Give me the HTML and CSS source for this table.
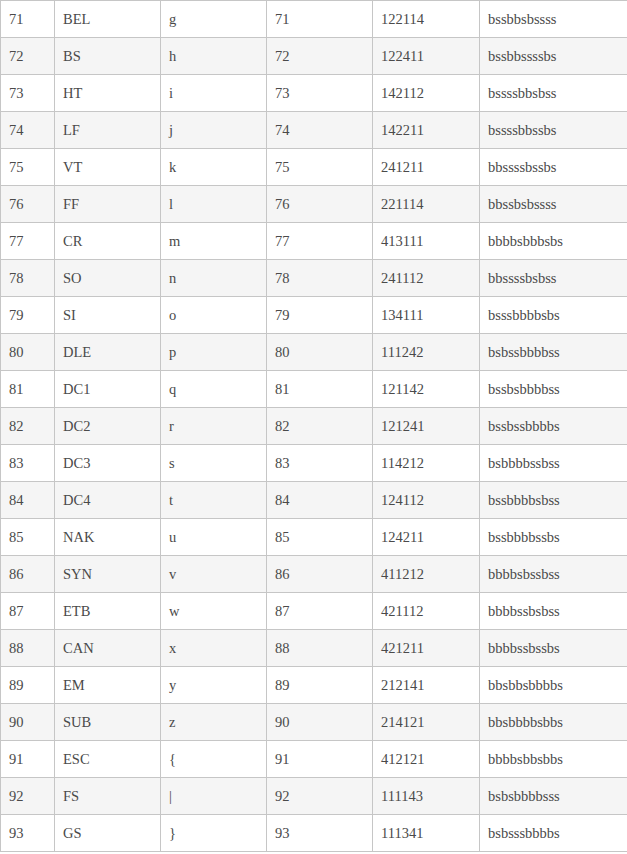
FILE: index.html
```html
<!DOCTYPE html>
<html>
<head>
<meta charset="utf-8">
<link rel="stylesheet" href="styles.css">
</head>
<body>
<table class="codes">
<colgroup>
<col class="c1"><col class="c2"><col class="c3"><col class="c4"><col class="c5"><col class="c6">
</colgroup>
<tbody>
<tr><td>71</td><td>BEL</td><td>g</td><td>71</td><td>122114</td><td>bssbbsbssss</td></tr>
<tr><td>72</td><td>BS</td><td>h</td><td>72</td><td>122411</td><td>bssbbssssbs</td></tr>
<tr><td>73</td><td>HT</td><td>i</td><td>73</td><td>142112</td><td>bssssbbsbss</td></tr>
<tr><td>74</td><td>LF</td><td>j</td><td>74</td><td>142211</td><td>bssssbbssbs</td></tr>
<tr><td>75</td><td>VT</td><td>k</td><td>75</td><td>241211</td><td>bbssssbssbs</td></tr>
<tr><td>76</td><td>FF</td><td>l</td><td>76</td><td>221114</td><td>bbssbsbssss</td></tr>
<tr><td>77</td><td>CR</td><td>m</td><td>77</td><td>413111</td><td>bbbbsbbbsbs</td></tr>
<tr><td>78</td><td>SO</td><td>n</td><td>78</td><td>241112</td><td>bbssssbsbss</td></tr>
<tr><td>79</td><td>SI</td><td>o</td><td>79</td><td>134111</td><td>bsssbbbbsbs</td></tr>
<tr><td>80</td><td>DLE</td><td>p</td><td>80</td><td>111242</td><td>bsbssbbbbss</td></tr>
<tr><td>81</td><td>DC1</td><td>q</td><td>81</td><td>121142</td><td>bssbsbbbbss</td></tr>
<tr><td>82</td><td>DC2</td><td>r</td><td>82</td><td>121241</td><td>bssbssbbbbs</td></tr>
<tr><td>83</td><td>DC3</td><td>s</td><td>83</td><td>114212</td><td>bsbbbbssbss</td></tr>
<tr><td>84</td><td>DC4</td><td>t</td><td>84</td><td>124112</td><td>bssbbbbsbss</td></tr>
<tr><td>85</td><td>NAK</td><td>u</td><td>85</td><td>124211</td><td>bssbbbbssbs</td></tr>
<tr><td>86</td><td>SYN</td><td>v</td><td>86</td><td>411212</td><td>bbbbsbssbss</td></tr>
<tr><td>87</td><td>ETB</td><td>w</td><td>87</td><td>421112</td><td>bbbbssbsbss</td></tr>
<tr><td>88</td><td>CAN</td><td>x</td><td>88</td><td>421211</td><td>bbbbssbssbs</td></tr>
<tr><td>89</td><td>EM</td><td>y</td><td>89</td><td>212141</td><td>bbsbbsbbbbs</td></tr>
<tr><td>90</td><td>SUB</td><td>z</td><td>90</td><td>214121</td><td>bbsbbbbsbbs</td></tr>
<tr><td>91</td><td>ESC</td><td>{</td><td>91</td><td>412121</td><td>bbbbsbbsbbs</td></tr>
<tr><td>92</td><td>FS</td><td>|</td><td>92</td><td>111143</td><td>bsbsbbbbsss</td></tr>
<tr><td>93</td><td>GS</td><td>}</td><td>93</td><td>111341</td><td>bsbsssbbbbs</td></tr>
</tbody>
</table>
</body>
</html>
```
FILE: styles.css
```css
html, body {
  margin: 0;
  padding: 0;
  background: #fff;
}
.codes {
  border-collapse: collapse;
  table-layout: fixed;
  width: 627px;
  font-family: "Liberation Serif", "DejaVu Serif", serif;
  font-size: 14.5px;
  font-variant-numeric: oldstyle-nums;
  color: #4a4a4a;
}
.c1 { width: 54px; }
.c2 { width: 106px; }
.c3 { width: 106px; }
.c4 { width: 106px; }
.c5 { width: 107px; }
.c6 { width: 148px; }
.codes td {
  border: 1px solid #c6c6c6;
  height: 37px;
  padding: 1px 8px 0;
  box-sizing: border-box;
  vertical-align: middle;
  white-space: nowrap;
}
.codes tr:nth-child(even) td {
  background: #f5f5f5;
}
```
